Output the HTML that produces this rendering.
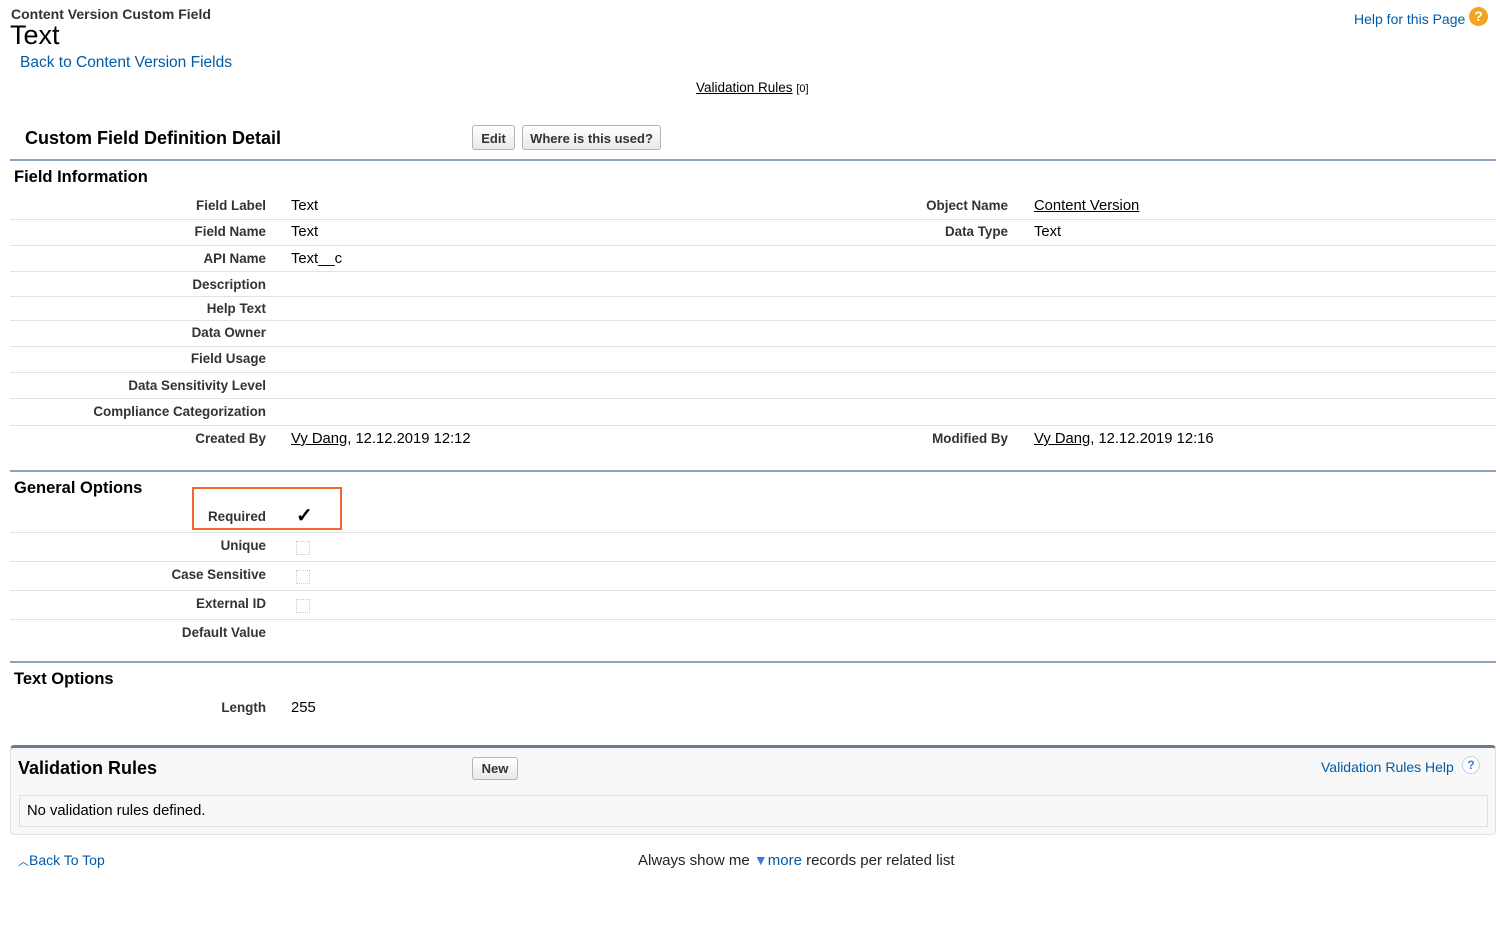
<!DOCTYPE html>
<html><head><meta charset="utf-8"><style>
body{margin:0;width:1500px;height:946px;background:#fff;font-family:"Liberation Sans",Arial,sans-serif;color:#000;position:relative;overflow:hidden}
.a{position:absolute;white-space:nowrap}
.lab{position:absolute;font-weight:bold;font-size:13.4px;color:#333;text-align:right;white-space:nowrap}
.val{position:absolute;font-size:14.8px;color:#000;white-space:nowrap}
.sep{position:absolute;left:10px;width:1486px;height:1px;background:#e3e3e3}
.sec{position:absolute;left:10px;width:1486px;height:2px;background:#8fa2c2}
.h{position:absolute;font-weight:bold;font-size:16.5px;color:#000}
.btn{position:absolute;height:25px;border:1px solid #b5b5b5;border-radius:3px;background:linear-gradient(#fff,#e9e9e9);font-weight:bold;font-size:13px;line-height:25px;text-align:center;color:#333;box-sizing:border-box}
.cb{position:absolute;left:296px;width:14px;height:14px;border:1px dotted #ccc;box-sizing:border-box}
a,.lnk{color:#015ba7;text-decoration:none}
u{text-decoration:underline}
</style></head><body>
<div class="a" style="left:11px;top:6px;font-size:14px;font-weight:bold;color:#333">Content Version Custom Field</div>
<div class="a" style="left:10px;top:20px;font-size:27px;color:#000">Text</div>
<div class="a lnk" style="left:20px;top:54px;font-size:15.5px">Back to Content Version Fields</div>
<div class="a lnk" style="left:1354px;top:11px;font-size:14px">Help for this Page</div>
<div class="a" style="left:1469px;top:7px;width:19px;height:19px;border-radius:50%;background:#f2a41f;color:#fff;font-weight:bold;font-size:14px;text-align:center;line-height:19px">?</div>
<div class="a" style="left:696px;top:80px;font-size:13.5px;color:#000"><u>Validation Rules</u> <span style="font-size:11px">[0]</span></div>

<div class="a" style="left:25px;top:128px;font-size:18px;font-weight:bold">Custom Field Definition Detail</div>
<div class="btn" style="left:472px;top:125px;width:43px">Edit</div>
<div class="btn" style="left:522px;top:125px;width:139px">Where is this used?</div>
<div class="sec" style="top:159px"></div>
<div class="h" style="left:14px;top:168px">Field Information</div>

<div class="lab" style="right:1234px;top:198px">Field Label</div><div class="val" style="left:291px;top:198px">Text</div>
<div class="lab" style="right:492px;top:198px">Object Name</div><div class="val" style="left:1034px;top:198px"><u>Content Version</u></div>
<div class="sep" style="top:219px"></div>
<div class="lab" style="right:1234px;top:224px">Field Name</div><div class="val" style="left:291px;top:224px">Text</div>
<div class="lab" style="right:492px;top:224px">Data Type</div><div class="val" style="left:1034px;top:224px">Text</div>
<div class="sep" style="top:245px"></div>
<div class="lab" style="right:1234px;top:251px">API Name</div><div class="val" style="left:291px;top:251px">Text__c</div>
<div class="sep" style="top:271px"></div>
<div class="lab" style="right:1234px;top:277px">Description</div>
<div class="sep" style="top:296px"></div>
<div class="lab" style="right:1234px;top:301px">Help Text</div>
<div class="sep" style="top:320px"></div>
<div class="lab" style="right:1234px;top:325px">Data Owner</div>
<div class="sep" style="top:346px"></div>
<div class="lab" style="right:1234px;top:351px">Field Usage</div>
<div class="sep" style="top:372px"></div>
<div class="lab" style="right:1234px;top:378px">Data Sensitivity Level</div>
<div class="sep" style="top:398px"></div>
<div class="lab" style="right:1234px;top:404px">Compliance Categorization</div>
<div class="sep" style="top:425px"></div>
<div class="lab" style="right:1234px;top:431px">Created By</div><div class="val" style="left:291px;top:431px"><u>Vy Dang</u>, 12.12.2019 12:12</div>
<div class="lab" style="right:492px;top:431px">Modified By</div><div class="val" style="left:1034px;top:431px"><u>Vy Dang</u>, 12.12.2019 12:16</div>

<div class="sec" style="top:470px"></div>
<div class="h" style="left:14px;top:479px">General Options</div>
<div class="a" style="left:192px;top:487px;width:150px;height:43px;border:2px solid #f0692a;box-sizing:border-box"></div>
<div class="lab" style="right:1234px;top:509px">Required</div>
<div class="a" style="left:296px;top:503px;font-size:20px;font-weight:bold">✓</div>
<div class="sep" style="top:532px"></div>
<div class="lab" style="right:1234px;top:538px">Unique</div><div class="cb" style="top:541px"></div>
<div class="sep" style="top:561px"></div>
<div class="lab" style="right:1234px;top:567px">Case Sensitive</div><div class="cb" style="top:570px"></div>
<div class="sep" style="top:590px"></div>
<div class="lab" style="right:1234px;top:596px">External ID</div><div class="cb" style="top:599px"></div>
<div class="sep" style="top:619px"></div>
<div class="lab" style="right:1234px;top:625px">Default Value</div>

<div class="sec" style="top:661px"></div>
<div class="h" style="left:14px;top:670px">Text Options</div>
<div class="lab" style="right:1234px;top:700px">Length</div><div class="val" style="left:291px;top:700px">255</div>

<div class="a" style="left:10px;top:745px;width:1486px;height:90px;background:#f8f8f8;border:1px solid #e0e0e0;border-top:3px solid #6d7a94;border-radius:4px;box-sizing:border-box"></div>
<div class="a" style="left:18px;top:758px;font-size:18px;font-weight:bold">Validation Rules</div>
<div class="btn" style="left:472px;top:757px;width:46px;height:23px;line-height:22px">New</div>
<div class="a lnk" style="left:1321px;top:759px;font-size:14px">Validation Rules Help</div>
<div class="a" style="left:1462px;top:756px;width:18px;height:18px;border-radius:50%;background:#fff;border:1px solid #c8d3e4;box-sizing:border-box;color:#3a7bd5;font-weight:bold;font-size:12px;text-align:center;line-height:16px">?</div>
<div class="a" style="left:19px;top:795px;width:1469px;height:32px;border:1px solid #e0e0e0;background:#f8f8f8;box-sizing:border-box"></div>
<div class="a" style="left:27px;top:803px;font-size:14.8px">No validation rules defined.</div>

<div class="a lnk" style="left:18px;top:852px;font-size:14px"><span style="font-size:11px">︿</span>Back To Top</div>
<div class="a" style="left:638px;top:852px;font-size:15px;color:#222">Always show me <span style="color:#3a7bd5;font-size:14px">▼</span><span class="lnk">more</span> records per related list</div>
</body></html>
